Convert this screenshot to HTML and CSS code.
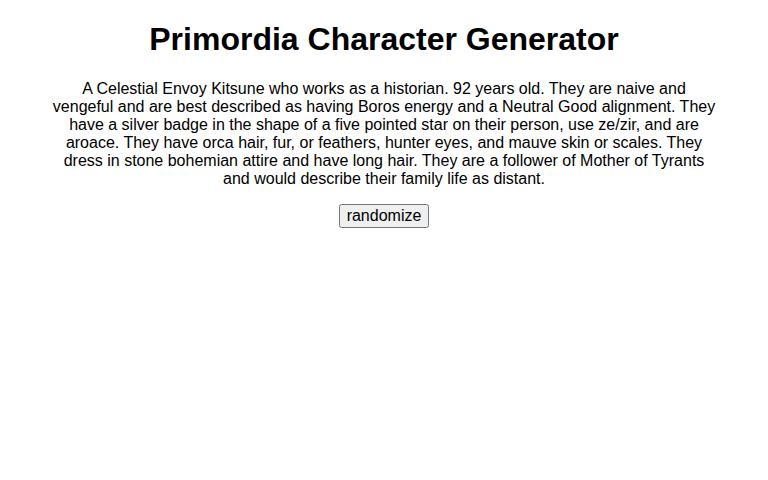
FILE: index.html
```html
<!DOCTYPE html>
<html lang="en">
<head>
<meta charset="utf-8">
<title>Primordia Character Generator</title>
<link rel="stylesheet" href="styles.css">
</head>
<body>
<main class="page">
  <h1 class="title">Primordia Character Generator</h1>
  <p class="description">A Celestial Envoy Kitsune who works as a historian. 92 years old. They are naive and vengeful and are best described as having Boros energy and a Neutral Good alignment. They have a silver badge in the shape of a five pointed star on their person, use ze/zir, and are aroace. They have orca hair, fur, or feathers, hunter eyes, and mauve skin or scales. They dress in stone bohemian attire and have long hair. They are a follower of Mother of Tyrants and would describe their family life as distant.</p>
  <button class="randomize" type="button">randomize</button>
</main>
</body>
</html>
```

FILE: styles.css
```css
body {
  margin: 0 8px 8px;
  font-family: "Liberation Sans", Arial, sans-serif;
  color: #000;
  background: #fff;
}

.page {
  text-align: center;
}

.title {
  font-size: 32px;
  font-weight: bold;
  margin: 21.44px 0;
}

.description {
  font-size: 16px;
  max-width: 666px;
  margin: 16px auto;
}

.randomize {
  font-family: "Liberation Sans", Arial, sans-serif;
  font-size: 16px;
}
```
